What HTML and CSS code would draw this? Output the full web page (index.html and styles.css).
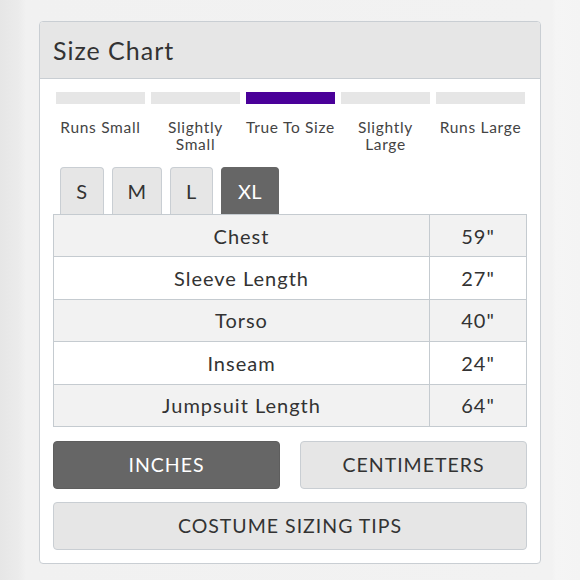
FILE: index.html
```html
<!DOCTYPE html>
<html>
<head>
<meta charset="utf-8">
<link rel="stylesheet" href="styles.css">
</head>
<body>
<div class="page">
  <div class="card">
    <div class="card-header">Size Chart</div>
    <div class="card-body">
      <div class="fit-bars">
        <div class="bar"></div>
        <div class="bar"></div>
        <div class="bar active"></div>
        <div class="bar"></div>
        <div class="bar"></div>
      </div>
      <div class="fit-labels">
        <div>Runs Small</div>
        <div>Slightly<br>Small</div>
        <div>True To Size</div>
        <div>Slightly<br>Large</div>
        <div>Runs Large</div>
      </div>
      <div class="tabs">
        <div class="tab tab-s">S</div>
        <div class="tab tab-m">M</div>
        <div class="tab tab-l">L</div>
        <div class="tab tab-xl selected">XL</div>
      </div>
      <table class="chart">
        <tr><td>Chest</td><td class="val">59"</td></tr>
        <tr><td>Sleeve Length</td><td class="val">27"</td></tr>
        <tr><td>Torso</td><td class="val">40"</td></tr>
        <tr><td>Inseam</td><td class="val">24"</td></tr>
        <tr><td>Jumpsuit Length</td><td class="val">64"</td></tr>
      </table>
      <div class="units">
        <div class="btn dark">INCHES</div>
        <div class="btn">CENTIMETERS</div>
      </div>
      <div class="btn wide">COSTUME SIZING TIPS</div>
    </div>
  </div>
</div>
</body>
</html>
```
FILE: styles.css
```css
html, body {
  margin: 0;
  padding: 0;
}
body {
  width: 580px;
  height: 580px;
  overflow: hidden;
  background: linear-gradient(90deg, #e6e6e6 0px, #ebebeb 18px, #f1f1f1 26px, #f2f2f2 552px, #f5f5f5 556px, #f4f4f4 580px);
  font-family: "Lato", "Open Sans", sans-serif;
  color: #333;
}
.page {
  padding: 21px 0 0 39px;
}
.card {
  width: 500px;
  border: 1px solid #c9ced3;
  border-radius: 4px;
  background: #fff;
  overflow: hidden;
}
.card-header {
  height: 56px;
  line-height: 56px;
  background: #e6e6e6;
  border-bottom: 1px solid #c9ced3;
  padding-left: 13px;
  font-size: 25px;
  color: #333;
  letter-spacing: 1px;
}
.card-body {
  padding: 13px 13px 13px 13px;
}
.fit-bars {
  display: grid;
  grid-template-columns: repeat(5, 1fr);
  gap: 6px;
  padding: 0 2px 0 3px;
}
.bar {
  height: 12px;
  background: #e6e6e6;
}
.bar.active {
  background: #4a0099;
}
.fit-labels {
  display: grid;
  grid-template-columns: repeat(5, 1fr);
  gap: 6px;
  padding: 0 2px 0 3px;
  margin-top: 15px;
  font-size: 15.5px;
  line-height: 17px;
  letter-spacing: 0.7px;
  text-align: center;
  color: #444;
  height: 34px;
}
.fit-labels div {
  white-space: nowrap;
}
.tabs {
  display: flex;
  gap: 8px;
  margin-top: 14px;
  padding-left: 7px;
  height: 47px;
}
.tab {
  box-sizing: border-box;
  height: 47px;
  line-height: 47px;
  padding: 0;
  background: #e6e6e6;
  border: 1px solid #c9ced3;
  border-bottom: none;
  border-radius: 4px 4px 0 0;
  font-size: 20px;
  letter-spacing: 0.5px;
  color: #333;
  text-align: center;
}
.tab-s { width: 44px; }
.tab-m { width: 50px; }
.tab-l { width: 43px; }
.tab-xl { width: 58px; }
.tab.selected {
  background: #666;
  border-color: #666;
  color: #fff;
}
.chart {
  width: 474px;
  border-collapse: collapse;
  font-size: 20px;
  letter-spacing: 1px;
  color: #333;
}
.chart td {
  border: 1px solid #c5cbd0;
  height: 41.4px;
  padding: 0;
  text-align: center;
}
.chart tr:nth-child(odd) td {
  background: #f2f2f2;
}
.chart td.val {
  width: 96px;
}
.units {
  display: flex;
  gap: 20px;
  margin-top: 14px;
}
.btn {
  box-sizing: border-box;
  height: 48px;
  line-height: 46px;
  flex: 1;
  background: #e6e6e6;
  border: 1px solid #c9ced3;
  border-radius: 4px;
  text-align: center;
  font-size: 19.5px;
  letter-spacing: 1px;
  color: #333;
}
.btn.dark {
  background: #666;
  border-color: #5e5e5e;
  color: #fff;
}
.btn.wide {
  margin-top: 13px;
}
```
